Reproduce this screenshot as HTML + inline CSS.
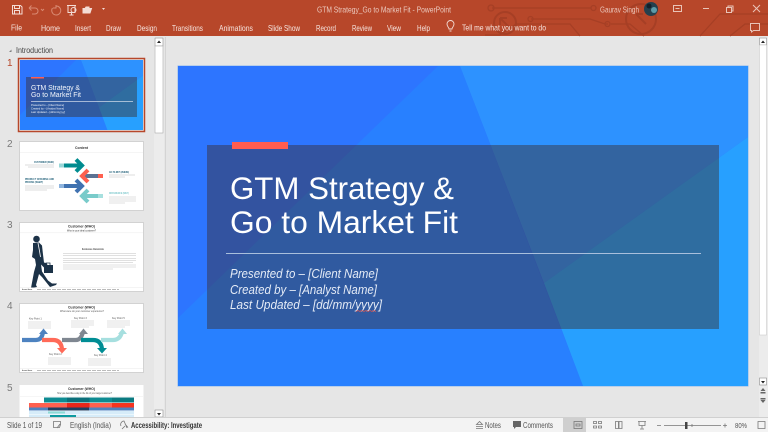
<!DOCTYPE html>
<html><head><meta charset="utf-8"><title>GTM Strategy</title>
<style>html,body{margin:0;padding:0;background:#e6e6e6;width:768px;height:432px;overflow:hidden}svg{display:block;position:absolute;left:0;top:0}text{font-family:"Liberation Sans",sans-serif}</style></head>
<body>
<svg width="768" height="432" viewBox="0 0 768 432" xmlns="http://www.w3.org/2000/svg">
<defs>
<clipPath id="c1"><rect x="178" y="66" width="570" height="320"/></clipPath>
<filter id="b2"><feGaussianBlur stdDeviation="0.3"/></filter>
</defs>
<rect width="768" height="432" fill="#e6e6e6"/>
<!-- title bar -->
<rect width="768" height="36" fill="#b7472a"/>
<g fill="none" stroke="#a63f25" stroke-width="1.300">
<path d="M492 8H591M488 8a3 3 0 1 0 6 0a3 3 0 1 0-6 0M591 8a2.500 2.500 0 1 0 5 0a2.500 2.500 0 1 0-5 0"/>
<circle cx="505" cy="23" r="11" stroke-width="2"/><path d="M500 18l10 10M500 18h7M500 18v7" stroke-width="2"/>
<path d="M531 19H590L605 24H608M611 24H630L644 36M528 19a2.500 2.500 0 1 0 5 0a2.500 2.500 0 1 0-5 0M605 24a2.500 2.500 0 1 0 5 0a2.500 2.500 0 1 0-5 0"/>
<path d="M485 35H500L516 24H570L580 36"/>
<circle cx="641" cy="19" r="15" stroke-width="2"/><path d="M636 14l10 10M636 14h7" stroke-width="2"/>
<path d="M700 36L720 14H768M730 36L745 24H768"/>
</g>
<!-- QAT -->
<g fill="none" stroke="#f4dcd5" stroke-width="1">
<path d="M12.500 5.500h8l1.500 1.500v7h-9.500zM14.500 5.500v3h5v-3M14.500 14v-3.500h5V14"/>
<path d="M29 8h6a3 3 0 0 1 0 6h-3M29 8l2.500-2.500M29 8l2.500 2.500" stroke="#d98a73"/>
<path d="M41 9l1.500 1.500L44 9" stroke="#d98a73"/>
<path d="M56 6a4.500 4.500 0 1 1-3.500 2M56 5v3h-3" stroke="#d98a73"/>
<path d="M67 5.500h9M68 5.500v7h7v-7M71.500 12.500v2M69.500 15h4"/><circle cx="73.500" cy="10" r="2.500"/>
<path d="M83 8.500h2l1-1.500h3v1.500h2.500l-1.500 4.500h-7z" fill="#f4dcd5"/>
<path d="M102 8h3l-1.500 2z" fill="#f4dcd5" stroke="none"/>
</g>
<g fill="#f6e4de" font-size="8.500">
<text x="317" y="12.500" textLength="134" lengthAdjust="spacingAndGlyphs" fill="#eccabf">GTM Strategy_Go to Market Fit  -  PowerPoint</text>
<text x="600" y="12.500" textLength="39" lengthAdjust="spacingAndGlyphs" fill="#eccabf">Gaurav Singh</text>
<text x="11" y="30.500" textLength="11" lengthAdjust="spacingAndGlyphs">File</text>
<text x="41" y="31" textLength="19" lengthAdjust="spacingAndGlyphs">Home</text>
<text x="75" y="31" textLength="16" lengthAdjust="spacingAndGlyphs">Insert</text>
<text x="106" y="31" textLength="15" lengthAdjust="spacingAndGlyphs">Draw</text>
<text x="137" y="31" textLength="20" lengthAdjust="spacingAndGlyphs">Design</text>
<text x="172" y="31" textLength="31" lengthAdjust="spacingAndGlyphs">Transitions</text>
<text x="219" y="31" textLength="34" lengthAdjust="spacingAndGlyphs">Animations</text>
<text x="268" y="31" textLength="32" lengthAdjust="spacingAndGlyphs">Slide Show</text>
<text x="316" y="31" textLength="20" lengthAdjust="spacingAndGlyphs">Record</text>
<text x="352" y="31" textLength="20" lengthAdjust="spacingAndGlyphs">Review</text>
<text x="387" y="31" textLength="14" lengthAdjust="spacingAndGlyphs">View</text>
<text x="417" y="31" textLength="13" lengthAdjust="spacingAndGlyphs">Help</text>
<text x="462" y="30.500" textLength="84" lengthAdjust="spacingAndGlyphs">Tell me what you want to do</text>
</g>
<!-- bulb -->
<g fill="none" stroke="#f3dcd5" stroke-width="0.900"><path d="M449 29c0-1.500-2-2.500-2-5a3.500 3.500 0 0 1 7 0c0 2.500-2 3.500-2 5zM449.500 31h2"/></g>
<!-- avatar -->
<circle cx="651" cy="9" r="7" fill="#26404d"/><circle cx="654" cy="10" r="3" fill="#5d9ba8"/><circle cx="649" cy="6" r="2.500" fill="#12202a"/>
<!-- window buttons -->
<g fill="none" stroke="#e9c4b8" stroke-width="1">
<path d="M673.500 5.500h8v6h-8zM675.500 8.500h4"/>
<path d="M703 8.500h6"/>
<path d="M726.500 7.500h5v5h-5zM728 7.500v-1.500h5v5h-1.500"/>
<path d="M753 5l7 7M760 5l-7 7"/>
<path d="M750.500 23.500h9v7h-6l-2 1.500v-1.500h-1z"/>
</g>
<!-- left pane -->
<path d="M9 52h2.500v-2.500z" fill="#808080"/>
<text x="16" y="53" font-size="8.300" fill="#444" textLength="37" lengthAdjust="spacingAndGlyphs">Introduction</text>
<g font-size="10" fill="#7a7a7a">
<text x="7" y="66" fill="#b7472a">1</text><text x="7" y="147">2</text><text x="7" y="228">3</text><text x="7" y="309">4</text><text x="7" y="391">5</text>
</g>
<!-- scrollbar left -->
<rect x="154" y="37" width="10" height="381" fill="#ececec"/>
<rect x="155" y="38" width="8" height="8" fill="#fff" stroke="#8d8d8d" stroke-width=".6"/>
<path d="M157 43h4l-2-2.500z" fill="#222"/>
<rect x="155" y="46" width="8" height="87" fill="#fff" stroke="#a9a9a9" stroke-width=".6"/>
<rect x="155" y="410" width="8" height="7" fill="#fff" stroke="#8d8d8d" stroke-width=".6"/>
<path d="M157 413h4l-2 2.500z" fill="#222"/>
<rect x="165" y="37" width="1" height="381" fill="#d4d4d4"/>
<!-- right scrollbar -->
<rect x="759" y="37" width="9" height="381" fill="#ececec"/>
<rect x="759.500" y="38" width="7" height="7" fill="#fff" stroke="#8d8d8d" stroke-width=".6"/>
<path d="M761 43h4l-2-2.500z" fill="#222"/>
<rect x="759.500" y="45" width="7" height="290" fill="#fff" stroke="#c4c4c4" stroke-width=".5"/>
<rect x="759.500" y="378" width="7" height="7" fill="#fff" stroke="#8d8d8d" stroke-width=".6"/>
<path d="M761 381h4l-2 2.500z" fill="#222"/>
<path d="M763 388l-2.500 3h5zM760.500 392h5v1.500h-5zM760.500 398h5v1.500h-5zM763 403l-2.500-3h5z" fill="#666"/>
<!-- main slide -->
<rect x="177.500" y="65.500" width="571" height="321" fill="#8cb8ef"/>
<g clip-path="url(#c1)">
<rect x="178" y="66" width="570" height="320" fill="#2d75ff"/>
<polygon points="438,66 460,66 583,386 178,386 178,318" fill="#2880ff"/>
<polygon points="460,66 748,66 748,137 544,283" fill="#2d92ff"/>
<polygon points="748,137 748,386 583,386 544,283" fill="#27a0ff"/>
</g>
<rect x="207" y="145" width="512" height="184" fill="rgb(60,33,17)" fill-opacity=".4"/>
<rect x="232" y="142" width="56" height="7" fill="#ff5d4f"/>
<g fill="#fff" font-size="31.500">
<text x="230" y="199" textLength="224" lengthAdjust="spacingAndGlyphs">GTM Strategy &amp;</text>
<text x="230" y="233" textLength="228" lengthAdjust="spacingAndGlyphs">Go to Market Fit</text>
</g>
<rect x="226" y="253" width="475" height="1" fill="#a9bfdc"/>
<g fill="#e4ebf6" font-size="12.800" font-style="italic">
<text x="230" y="278" textLength="148" lengthAdjust="spacingAndGlyphs">Presented to – [Client Name]</text>
<text x="230" y="294" textLength="147" lengthAdjust="spacingAndGlyphs">Created by – [Analyst Name]</text>
<text x="230" y="309" textLength="152" lengthAdjust="spacingAndGlyphs">Last Updated – [dd/mm/yyyy]</text>
</g>
<path d="M356 311.500l2-1 2 1 2-1 2 1 2-1 2 1 2-1 2 1 2-1 2 1" fill="none" stroke="#d9534f" stroke-width=".7"/>
<!-- thumb 1 -->
<rect x="18.500" y="58.500" width="126" height="73" fill="none" stroke="#b7472a" stroke-width="1.500"/>
<rect x="20" y="60" width="123" height="70" fill="#2d75ff"/>
<polygon points="76,60 81,60 107.400,130 20,130 20,115" fill="#2880ff"/>
<polygon points="81,60 143,60 143,75.500 99,107.500" fill="#2d92ff"/>
<polygon points="143,75.500 143,130 107.400,130 99,107.500" fill="#27a0ff"/>
<rect x="26" y="77" width="111" height="40" fill="rgb(60,33,17)" fill-opacity=".4"/>
<rect x="31" y="77" width="13" height="1.500" fill="#ff5d4f"/>
<g fill="#f2f5fb" filter="url(#b2)">
<text x="31" y="90" font-size="7" textLength="49" lengthAdjust="spacingAndGlyphs">GTM Strategy &amp;</text>
<text x="31" y="97" font-size="7" textLength="50" lengthAdjust="spacingAndGlyphs">Go to Market Fit</text>
<rect x="31" y="101" width="102" height=".6"/>
<text x="31" y="106" font-size="2.900" textLength="33" lengthAdjust="spacingAndGlyphs">Presented to – [Client Name]</text>
<text x="31" y="109.500" font-size="2.900" textLength="33" lengthAdjust="spacingAndGlyphs">Created by – [Analyst Name]</text>
<text x="31" y="113" font-size="2.900" textLength="34" lengthAdjust="spacingAndGlyphs">Last Updated – [dd/mm/yyyy]</text>
</g>
<!-- thumb 2 -->
<rect x="19.500" y="141.500" width="124" height="69" fill="#fff" stroke="#d2d2d2"/>
<g filter="url(#b2)">
<text x="75" y="149" font-size="3.500" font-weight="bold" fill="#333" textLength="13" lengthAdjust="spacingAndGlyphs">Content</text>
<rect x="20" y="152" width="123" height=".6" fill="#eee"/>
<text x="34" y="163" font-size="2.500" font-weight="bold" fill="#1f5f78" textLength="20" lengthAdjust="spacingAndGlyphs">CUSTOMER (WHO)</text>
<path d="M25 165h29M28 167h26" stroke="#dcdcdc" stroke-width="1"/>
<text x="25" y="180" font-size="2.500" font-weight="bold" fill="#1f5f78" textLength="29" lengthAdjust="spacingAndGlyphs">PRODUCT OFFERING AND</text>
<text x="25" y="183" font-size="2.500" font-weight="bold" fill="#1f5f78" textLength="18" lengthAdjust="spacingAndGlyphs">PRICING (WHAT)</text>
<path d="M25 186h29M25 188h29M25 190h22" stroke="#dcdcdc" stroke-width="1"/>
<text x="109" y="173" font-size="2.500" font-weight="bold" fill="#1f5f78" textLength="20" lengthAdjust="spacingAndGlyphs">GO-TO-MKT (WHERE)</text>
<path d="M109 175h26M109 177h16" stroke="#dcdcdc" stroke-width="1"/>
<text x="109" y="194" font-size="2.500" font-weight="bold" fill="#7cc8cc" textLength="20" lengthAdjust="spacingAndGlyphs">DIFFERENCE (WHY)</text>
<path d="M109 197h27M109 199h27M109 201h27M109 203h16" stroke="#e2e2e2" stroke-width="1"/>
<g fill="none" stroke-linejoin="miter" stroke-width="4">
<path d="M60 165.500H81" stroke="#028b8f"/><path d="M76 159.500l6 6-6 6" stroke="#028b8f"/>
<path d="M102 176H84" stroke="#5b7293"/><path d="M88 170l-6 6 6 6" stroke="#ff6150"/>
<path d="M60 186H81" stroke="#3f72b0"/><path d="M76 180l6 6-6 6" stroke="#3f72b0"/>
<path d="M102 196H84" stroke="#79cbca"/><path d="M88 190l-6 6 6 6" stroke="#79cbca"/>
</g>
<rect x="59" y="163.500" width="5" height="4" fill="#9ad7d8"/><rect x="98" y="174" width="5" height="4" fill="#ff6150"/><rect x="59" y="184" width="5" height="4" fill="#8eb4de"/><rect x="98" y="194" width="5" height="4" fill="#a7e0df"/>
</g>
<!-- thumb 3 -->
<rect x="19.500" y="222.500" width="124" height="69" fill="#fff" stroke="#d2d2d2"/>
<g filter="url(#b2)">
<text x="68" y="227.500" font-size="3.500" font-weight="bold" fill="#333" textLength="27" lengthAdjust="spacingAndGlyphs">Customer (WHO)</text>
<text x="67" y="231.500" font-size="2.500" fill="#333" textLength="29" lengthAdjust="spacingAndGlyphs">Who is your ideal customer?</text>
<rect x="20" y="232.500" width="123" height=".6" fill="#eee"/>
<g fill="#1c3146">
<circle cx="36.500" cy="239" r="3.300"/>
<path d="M33 243l6-.5 3 3 1 9 1 8 3 1 1 4h-4l-3-3 1 7 6 9 4 3 5 0-1 1.500-6 2-8-10-3-3-3 11 1 2-6 1 3-16 2-7-1-6-3-2 1-7z"/>
<rect x="44" y="265" width="9" height="8"/><path d="M46 265v-2h4v2" fill="none" stroke="#1c3146" stroke-width=".8"/>
</g>
<path d="M38 243l1.500 8 1 6" stroke="#fff" stroke-width=".8" fill="none"/>
<text x="82" y="250" font-size="2.700" font-weight="bold" fill="#444" textLength="22" lengthAdjust="spacingAndGlyphs">Non-Business Characteristics</text>
<path d="M63 253.500h73M63 255.500h73M63 258.500h73M63 260.500h73M63 262.500h70M63 265h73M63 267h73M63 269h50" stroke="#e0e0e0" stroke-width=".9"/>
<rect x="20" y="287.500" width="123" height=".5" fill="#e8e8e8"/>
<text x="22" y="290" font-size="2" font-weight="bold" fill="#444">Insert here</text>
<path d="M37 289.500h82" stroke="#bbb" stroke-width=".9" stroke-dasharray="4 1"/>
</g>
<!-- thumb 4 -->
<rect x="19.500" y="303.500" width="124" height="69" fill="#fff" stroke="#d2d2d2"/>
<g filter="url(#b2)">
<text x="68" y="308.500" font-size="3.500" font-weight="bold" fill="#333" textLength="27" lengthAdjust="spacingAndGlyphs">Customer (WHO)</text>
<text x="60" y="312" font-size="2.500" fill="#555" textLength="44" lengthAdjust="spacingAndGlyphs">What were do your customer experience?</text>
<g font-size="2.500" fill="#555">
<text x="29" y="319.500">Key Point 1</text><text x="74" y="319">Key Point 3</text><text x="112" y="319">Key Point 5</text><text x="49" y="355">Key Point 2</text><text x="94" y="356">Key Point 4</text>
</g>
<path d="M28 322h23M28 324h23M28 326h23M28 328h23M71 321h23M71 323h23M71 325h23M71 327h18M107 321h23M107 323h23M107 325h23M107 327h18M48 358h23M48 360h23M48 362h23M48 364h23M88 359h23M88 361h23M88 363h23M88 365h23" stroke="#e0e0e0" stroke-width="1"/>
<g fill="none" stroke-width="4.200">
<path d="M22 340H36Q42 340 43 332" stroke="#4e82c0"/><path d="M39 334l4.500-5.500 4.500 5.500z" fill="#4e82c0" stroke="none"/>
<path d="M42 340H53Q61 340 62 349" stroke="#ff6a58"/><path d="M57 348h10l-5 5.500z" fill="#ff6a58" stroke="none"/>
<path d="M62 340H76Q81 340 83 332" stroke="#7f8791"/><path d="M79 334l4.500-5.500 4.500 5.500z" fill="#7f8791" stroke="none"/>
<path d="M81 340H93Q101 340 102 349" stroke="#008d94"/><path d="M97 348h10l-5 5.500z" fill="#008d94" stroke="none"/>
<path d="M101 340H113Q120 340 122 332" stroke="#a6dfdf"/><path d="M118 334l4.500-5.500 4.500 5.500z" fill="#a6dfdf" stroke="none"/>
</g>
<rect x="20" y="368.500" width="123" height=".5" fill="#e8e8e8"/>
<text x="22" y="371" font-size="2" font-weight="bold" fill="#444">Insert here</text>
<path d="M37 370.500h82" stroke="#bbb" stroke-width=".9" stroke-dasharray="4 1"/>
</g>
<!-- thumb 5 -->
<rect x="19.500" y="385" width="124" height="32" fill="#fff"/>
<text x="68" y="390" font-size="3.500" font-weight="bold" fill="#333" textLength="27" lengthAdjust="spacingAndGlyphs">Customer (WHO)</text>
<text x="57" y="394" font-size="2.300" fill="#555" textLength="55" lengthAdjust="spacingAndGlyphs">How you describe a day in the life of your target customer?</text>
<rect x="20" y="396" width="123" height=".5" fill="#eee"/>
<rect x="44" y="397.500" width="90" height="5" fill="#0e8b92"/><rect x="67" y="397.500" width="22.500" height="5" fill="#0b6f7a"/><rect x="112" y="397.500" width="22" height="5" fill="#0b7a80"/>
<rect x="29" y="403" width="105" height="4.500" fill="#ff604f"/><rect x="67" y="403" width="22.500" height="4.500" fill="#e8261a"/><rect x="112" y="403" width="22" height="4.500" fill="#f5341f"/>
<rect x="29" y="407.500" width="105" height="3" fill="#4e82c0"/><rect x="48" y="407.500" width="41" height="3" fill="#1e3e62"/>
<rect x="29" y="411" width="105" height="3" fill="#d6ecf9"/><rect x="48" y="411.500" width="17" height="2" fill="#8fdbd6"/>
<rect x="29" y="414.500" width="105" height="2.500" fill="#d6ecf9"/><rect x="50" y="415" width="26" height="2" fill="#0e9aa0"/>
<!-- status bar -->
<rect x="0" y="417" width="768" height="1" fill="#d0d0d0"/>
<rect x="0" y="418" width="768" height="14" fill="#f3f3f3"/>
<rect x="563" y="418" width="23" height="14" fill="#cfcfcf"/>
<g font-size="8" fill="#555">
<text x="7" y="428" textLength="35" lengthAdjust="spacingAndGlyphs">Slide 1 of 19</text>
<text x="70" y="428" textLength="41" lengthAdjust="spacingAndGlyphs">English (India)</text>
<text x="131" y="428" textLength="71" lengthAdjust="spacingAndGlyphs" fill="#333" font-weight="bold">Accessibility: Investigate</text>
<text x="485" y="428" textLength="16" lengthAdjust="spacingAndGlyphs">Notes</text>
<text x="523" y="428" textLength="30" lengthAdjust="spacingAndGlyphs">Comments</text>
<text x="735" y="428" textLength="12" lengthAdjust="spacingAndGlyphs" font-size="7">80%</text>
</g>
<g fill="none" stroke="#777" stroke-width=".8">
<path d="M53.500 421.500h7v3l-1 3h-6zM57 428l3-4"/>
<path d="M121 426a3.500 3.500 0 0 1 3-5l3 7M125 424l3 3.500M122 429l3-3"/>
<path d="M476 428.500h7M476 426.500h7M479.500 421.500l-3 3h6z"/>
<rect x="574" y="421.500" width="8" height="7"/><path d="M576 424h4v2h-4z"/>
<path d="M593.500 421.500h3v2h-3zM598.500 421.500h3v2h-3zM593.500 426h3v2h-3zM598.500 426h3v2h-3z"/>
<path d="M615.500 421.500h3v7h-3zM619 421.500h3v7h-3z"/>
<path d="M638 421.500h8M639 421.500v4h6v-4M642 425.500v3M640 429h4"/>
<path d="M758 421.500h7v7h-7z"/>
</g>
<path d="M513 421h8v6h-5l-2 2v-2h-1z" fill="#666"/>
<!-- zoom slider -->
<path d="M657 425.500h4M664 425.500h57M723 425.500h4M725 423.500v4M692 424v3" stroke="#777" stroke-width=".8" fill="none"/>
<rect x="685" y="422" width="2.500" height="7" fill="#444"/>
</svg>
</body></html>
